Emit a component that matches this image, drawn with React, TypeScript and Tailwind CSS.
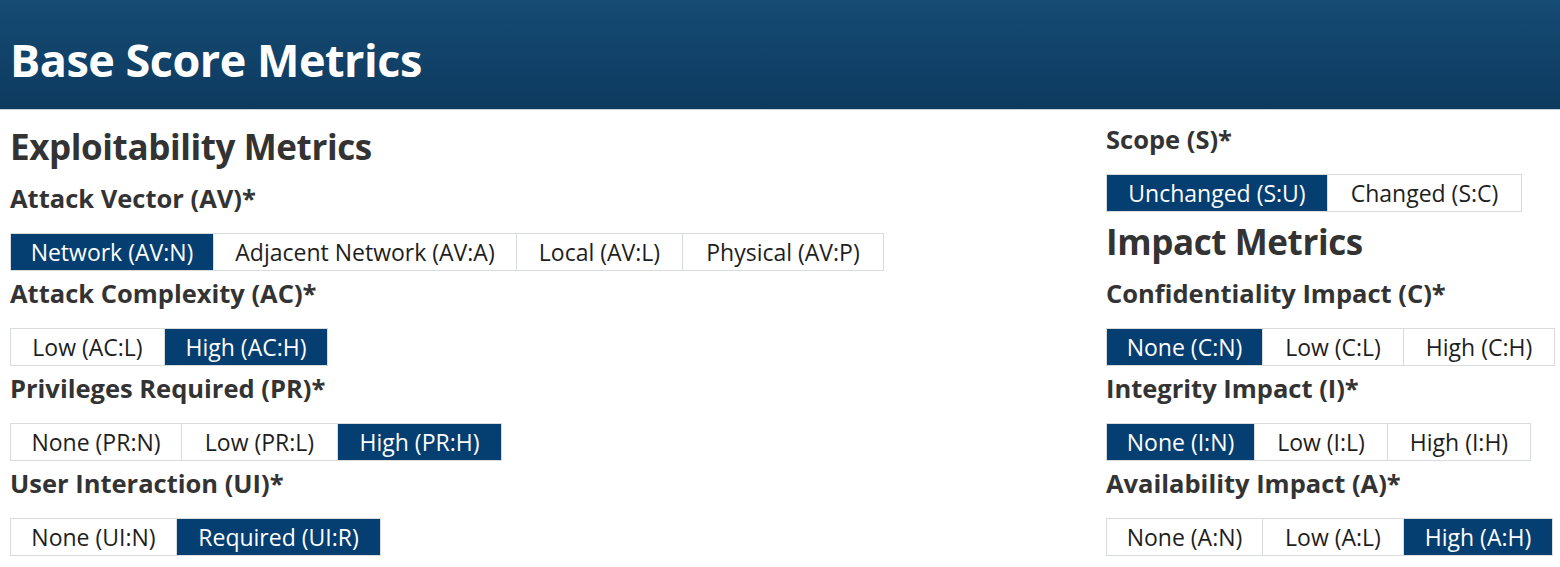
type Opt = { label: string; w: number; on?: boolean };

function Group({ opts }: { opts: Opt[] }) {
  return (
    <div className="flex">
      {opts.map((o, i) => (
        <div
          key={o.label}
          style={{ width: o.w }}
          className={
            "h-[38px] flex items-center justify-center border border-[#d8dcdc] text-[23px] whitespace-nowrap " +
            (i > 0 ? "border-l-0 " : "") +
            (o.on ? "bg-[#053e71] text-white font-medium" : "bg-white text-[#1e1e1e]")
          }
        >
          {o.label}
        </div>
      ))}
    </div>
  );
}

function Metric({ title, opts }: { title: string; opts: Opt[] }) {
  return (
    <div className="flex flex-col">
      <div className="h-[30px] leading-[30px] text-[25.5px] font-bold text-[#333] whitespace-nowrap">{title}</div>
      <div className="mt-[20px] mb-[7px]">
        <Group opts={opts} />
      </div>
    </div>
  );
}

export default function App() {
  return (
    <div className="w-[1560px] h-[567px] bg-white overflow-hidden" style={{ fontFamily: "'Open Sans', 'Noto Sans', sans-serif" }}>
      <div className="h-[110px] bg-gradient-to-b from-[#164b74] to-[#0d3a5f] border-b border-[#c9d2da] flex items-center px-[10px]">
        <h1 className="text-[45px] font-bold text-white leading-none mt-[10px] tracking-[-0.5px]">Base Score Metrics</h1>
      </div>
      <div className="flex justify-between pl-[10px] pr-[5px]">
        <div className="flex flex-col pt-[17px]">
          <h2 className="h-[40px] leading-[40px] text-[35px] font-bold text-[#333] mb-[16px] tracking-[-0.4px]">Exploitability Metrics</h2>
          <Metric
            title="Attack Vector (AV)*"
            opts={[
              { label: "Network (AV:N)", w: 204, on: true },
              { label: "Adjacent Network (AV:A)", w: 303 },
              { label: "Local (AV:L)", w: 166 },
              { label: "Physical (AV:P)", w: 201 },
            ]}
          />
          <Metric
            title="Attack Complexity (AC)*"
            opts={[
              { label: "Low (AC:L)", w: 155 },
              { label: "High (AC:H)", w: 163, on: true },
            ]}
          />
          <Metric
            title="Privileges Required (PR)*"
            opts={[
              { label: "None (PR:N)", w: 172 },
              { label: "Low (PR:L)", w: 156 },
              { label: "High (PR:H)", w: 164, on: true },
            ]}
          />
          <Metric
            title="User Interaction (UI)*"
            opts={[
              { label: "None (UI:N)", w: 167 },
              { label: "Required (UI:R)", w: 204, on: true },
            ]}
          />
        </div>
        <div className="flex flex-col w-[449px] pt-[14px]">
          <Metric
            title="Scope (S)*"
            opts={[
              { label: "Unchanged (S:U)", w: 222, on: true },
              { label: "Changed (S:C)", w: 194 },
            ]}
          />
          <h2 className="h-[40px] leading-[40px] text-[35px] font-bold text-[#333] mt-[3px] mb-[16px] tracking-[-0.4px]">Impact Metrics</h2>
          <Metric
            title="Confidentiality Impact (C)*"
            opts={[
              { label: "None (C:N)", w: 157, on: true },
              { label: "Low (C:L)", w: 141 },
              { label: "High (C:H)", w: 151 },
            ]}
          />
          <Metric
            title="Integrity Impact (I)*"
            opts={[
              { label: "None (I:N)", w: 149, on: true },
              { label: "Low (I:L)", w: 133 },
              { label: "High (I:H)", w: 143 },
            ]}
          />
          <Metric
            title="Availability Impact (A)*"
            opts={[
              { label: "None (A:N)", w: 157 },
              { label: "Low (A:L)", w: 141 },
              { label: "High (A:H)", w: 149, on: true },
            ]}
          />
        </div>
      </div>
    </div>
  );
}
